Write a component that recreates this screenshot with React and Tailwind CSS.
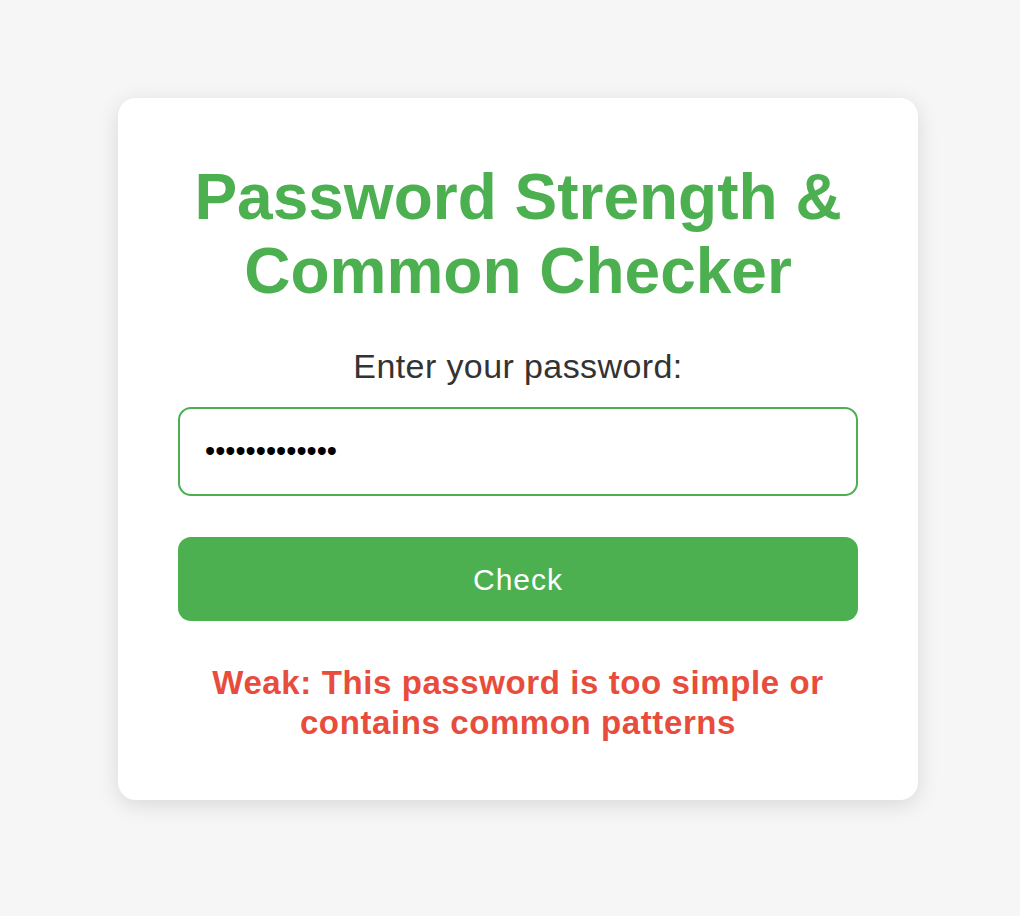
import { useState } from 'react';

const App = () => {
    const [password, setPassword] = useState('password12345');

    return (
        <div className="min-h-screen bg-[#f6f6f6] flex justify-center pt-[98px] pl-[16px] font-['Liberation_Sans',Arial,sans-serif]">
            <div className="w-[800px] h-[702px] bg-white rounded-[18px] shadow-[0_5px_22px_rgba(0,0,0,0.12)] px-[60px] pt-[60px] text-center">
                <h1 className="text-[64px] leading-[74px] font-bold text-[#4caf50] mt-[2px]">
                    Password Strength &amp;<br />Common Checker
                </h1>
                <label className="block mt-[38px] text-[34px] tracking-[0.4px] leading-[40px] text-[#333]">Enter your password:</label>
                <input
                    type="password"
                    value={password}
                    onChange={(e) => setPassword(e.target.value)}
                    className="block w-full h-[89px] mt-[21px] px-[25px] text-[29px] border-2 border-[#4caf50] rounded-[13px] outline-none text-black"
                />
                <button className="block w-full h-[84px] mt-[41px] bg-[#4caf50] text-white text-[30px] tracking-[1px] rounded-[13px]">
                    Check
                </button>
                <p className="mt-[42px] text-[33px] tracking-[0.6px] leading-[40px] font-bold text-[#e74c3c]">
                    Weak: This password is too simple or contains common patterns
                </p>
            </div>
        </div>
    );
};

export default App;
